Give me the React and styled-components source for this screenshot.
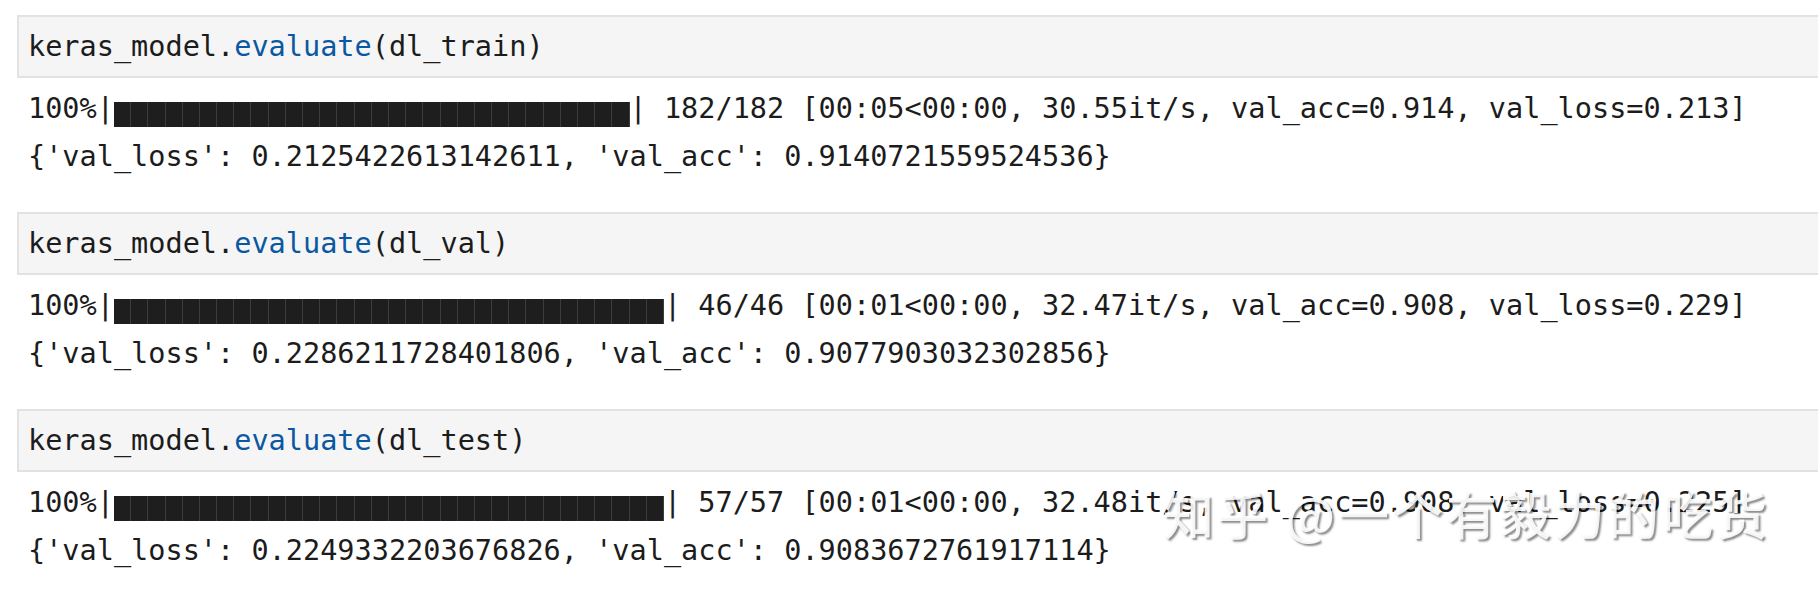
import React from 'react';
import styled, { createGlobalStyle } from 'styled-components';

const GlobalStyle = createGlobalStyle`
    html, body {
        margin: 0;
        padding: 0;
        background: #ffffff;
        overflow: hidden;
    }
`;

const Page = styled.div`
    position: relative;
    width: 1818px;
    height: 590px;
    padding: 15px 0 0 17px;
    box-sizing: border-box;
    font-family: "DejaVu Sans Mono", "Liberation Mono", monospace;
    font-size: 28.55px;
    color: #1c1c1c;
    overflow: hidden;
`;

const Cell = styled.div`
    margin-bottom: 32px;
`;

const InputBox = styled.div`
    margin-right: -20px;
    height: 63px;
    box-sizing: border-box;
    padding: 5px 0 0 9px;
    background: #f5f5f5;
    border: 2px solid #e2e2e2;
    line-height: 48px;
    white-space: pre;
`;

const Prop = styled.span`
    color: #0b58a2;
`;

const Output = styled.div`
    padding: 6px 0 0 11px;
`;

const Line = styled.div`
    height: 48px;
    line-height: 48px;
    white-space: pre;
`;

const Bar = styled.span`
    display: inline-block;
    width: ${p => p.$blocks}ch;
    height: 25px;
    vertical-align: -9px;
    background: repeating-linear-gradient(
        to right,
        #1e1e1e 0,
        #1e1e1e calc(1ch - 1px),
        #3c3c3c calc(1ch - 1px),
        #3c3c3c 1ch
    );
`;

const Watermark = styled.div`
    position: absolute;
    left: 1163px;
    top: 476px;
    font-family: "Noto Sans CJK SC", "Noto Sans", sans-serif;
    font-size: 51px;
    font-weight: 500;
    letter-spacing: 3px;
    color: rgba(255, 255, 255, 0.9);
    text-shadow: 2px 2px 2px rgba(0, 0, 0, 0.45);
    white-space: pre;
`;

const cells = [
    {
        arg: 'dl_train',
        blocks: 30,
        stats: '182/182 [00:05<00:00, 30.55it/s, val_acc=0.914, val_loss=0.213]',
        result: "{'val_loss': 0.2125422613142611, 'val_acc': 0.9140721559524536}"
    },
    {
        arg: 'dl_val',
        blocks: 32,
        stats: '46/46 [00:01<00:00, 32.47it/s, val_acc=0.908, val_loss=0.229]',
        result: "{'val_loss': 0.2286211728401806, 'val_acc': 0.9077903032302856}"
    },
    {
        arg: 'dl_test',
        blocks: 32,
        stats: '57/57 [00:01<00:00, 32.48it/s, val_acc=0.908, val_loss=0.225]',
        result: "{'val_loss': 0.2249332203676826, 'val_acc': 0.9083672761917114}"
    }
];

export default function App() {
    return (
        <>
            <GlobalStyle />
            <Page>
                {cells.map(c => (
                    <Cell key={c.arg}>
                        <InputBox>
                            keras_model.<Prop>evaluate</Prop>({c.arg})
                        </InputBox>
                        <Output>
                            <Line>
                                100%|<Bar $blocks={c.blocks} />| {c.stats}
                            </Line>
                            <Line>{c.result}</Line>
                        </Output>
                    </Cell>
                ))}
                <Watermark>知乎 @一个有毅力的吃货</Watermark>
            </Page>
        </>
    );
}
